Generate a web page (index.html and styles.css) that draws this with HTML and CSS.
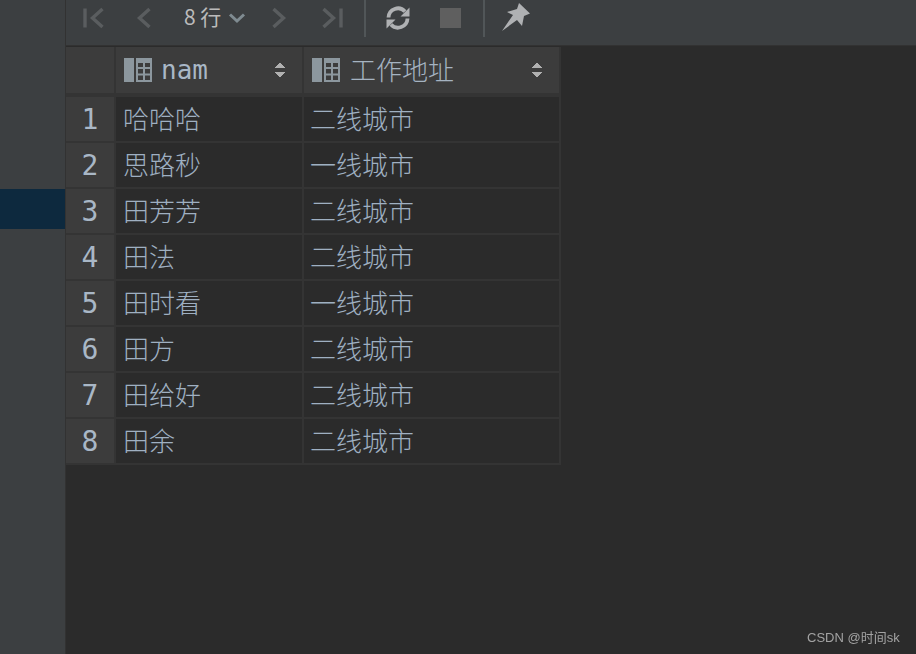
FILE: index.html
```html
<!DOCTYPE html>
<html lang="zh">
<head>
<meta charset="utf-8">
<title>Results</title>
<link rel="stylesheet" href="styles.css">
</head>
<body>
<div class="app">
  <aside class="side"><div class="side-sel"></div></aside>
  <main class="main">
    <div class="toolbar">
      <svg class="ic first" width="24" height="24" viewBox="0 0 24 24"><path d="M3 2.500v19M20.500 3l-10 9 10 9" fill="none" stroke="#5a5d5f" stroke-width="3.400"/></svg>
      <svg class="ic prev" width="16" height="24" viewBox="0 0 16 24"><path d="M13.500 3l-10 9 10 9" fill="none" stroke="#5a5d5f" stroke-width="3.400"/></svg>
      <span class="count">8 行</span>
      <svg class="chev" width="18" height="12" viewBox="0 0 18 12"><path d="M2 2.500l7 6.500 7-6.500" fill="none" stroke="#7f8b91" stroke-width="3"/></svg>
      <svg class="ic next" width="16" height="24" viewBox="0 0 16 24"><path d="M2.500 3l10 9-10 9" fill="none" stroke="#5a5d5f" stroke-width="3.400"/></svg>
      <svg class="ic last" width="24" height="24" viewBox="0 0 24 24"><path d="M3.500 3l10 9-10 9M21 2.500v19" fill="none" stroke="#5a5d5f" stroke-width="3.400"/></svg>
      <i class="sep sep-a"></i>
      <svg class="ic reload" width="26" height="26" viewBox="0 0 26 26"><path d="M3.500 12.500A9.500 9.500 0 0 1 20 6.500M22.500 13.500A9.500 9.500 0 0 1 6 19.500" fill="none" stroke="#afb1b3" stroke-width="3.800"/><path d="M24.500 2.500v9h-9zM1.500 23.500v-9h9z" fill="#afb1b3"/></svg>
      <span class="stop"></span>
      <i class="sep sep-b"></i>
      <svg class="ic pin" width="28" height="28" viewBox="0 0 28 28"><path d="M0 28L11 12 5 9 15 6 17 0 28 10.500 22 13 20 23 15 17z" fill="#afb1b3"/></svg>
    </div>
    <div class="grid">
      <div class="corner"></div>
      <div class="head"><svg class="tbl" width="28" height="24" viewBox="0 0 28 24"><path d="M0 0h10v24H0zM12 0h16v5H12z" fill="#8c979e"/><path d="M12 10h16M12 16.500h16M12 23h16M20 5v18M27 5v18M13 5v18" fill="none" stroke="#8c979e" stroke-width="2"/></svg><span class="hname">nam</span><span class="sort"></span></div>
      <div class="head"><svg class="tbl" width="28" height="24" viewBox="0 0 28 24"><path d="M0 0h10v24H0zM12 0h16v5H12z" fill="#8c979e"/><path d="M12 10h16M12 16.500h16M12 23h16M20 5v18M27 5v18M13 5v18" fill="none" stroke="#8c979e" stroke-width="2"/></svg><span class="hname cjk">工作地址</span><span class="sort"></span></div>

      <div class="num">1</div><div class="cell">哈哈哈</div><div class="cell addr">二线城市</div>
      <div class="num">2</div><div class="cell">思路秒</div><div class="cell addr">一线城市</div>
      <div class="num">3</div><div class="cell">田芳芳</div><div class="cell addr">二线城市</div>
      <div class="num">4</div><div class="cell">田法</div><div class="cell addr">二线城市</div>
      <div class="num">5</div><div class="cell">田时看</div><div class="cell addr">一线城市</div>
      <div class="num">6</div><div class="cell">田方</div><div class="cell addr">二线城市</div>
      <div class="num">7</div><div class="cell">田给好</div><div class="cell addr">二线城市</div>
      <div class="num">8</div><div class="cell">田余</div><div class="cell addr">二线城市</div>
    </div>
  </main>
</div>
<div class="mark">CSDN @时间sk</div>
</body>
</html>
```
FILE: styles.css
```css
* { box-sizing: border-box; }
html, body { margin: 0; height: 100%; overflow: hidden; background: #2b2b2b; }
.app { display: flex; width: 916px; height: 654px; }
.side { width: 65px; background: #3c3f41; padding-top: 189px; flex: none; }
.side-sel { height: 40px; background: #0d293e; }
.main { flex: 1; border-left: 1px solid #323232; display: flex; flex-direction: column; }
.toolbar { height: 46px; background: #3c3f41; border-bottom: 1px solid #323232; display: flex; align-items: center; padding: 0 0 10px 16px; flex: none; }
.ic { display: block; flex: none; }
.prev { margin-left: 30px; }
.count { margin-left: 32px; margin-top: -3px; font: 21px "Noto Sans CJK SC", "DejaVu Sans", sans-serif; color: #bbbbbb; line-height: 30px; white-space: nowrap; }
.chev { margin-left: 7px; }
.next { margin-left: 25px; }
.last { margin-left: 33px; }
.sep { display: block; width: 2px; height: 37px; background: #515658; flex: none; align-self: flex-start; }
.sep-a { margin-left: 20px; }
.reload { margin-left: 19px; }
.stop { display: block; width: 21px; height: 20px; background: #5f5f5f; margin-left: 29px; flex: none; }
.sep-b { margin-left: 22px; }
.pin { margin-left: 17px; margin-top: -2px; }
.grid { display: grid; grid-template-columns: 48px 186px 255px; grid-template-rows: 48px repeat(8, 44px); gap: 2px; width: 495px; margin-top: 1px; background: #343434; padding: 0 2px 2px 0; }
.corner { background: #3c3c3c; height: 46px; }
.head { background: #3c3c3c; height: 46px; display: flex; align-items: center; padding: 0 17px 0 8px; }
.tbl { flex: none; }
.hname { margin-left: 9px; flex: 1; font: 26px "DejaVu Sans Mono", monospace; color: #a9b7c6; white-space: nowrap; margin-top: -1px; }
.hname.cjk { margin-left: 10px; margin-top: -3px; font: 300 26px "Noto Sans CJK SC", sans-serif; color: #a5b3c1; }
.sort { display: block; width: 10px; height: 16px; flex: none; background:
  linear-gradient(to top left, #b0b0b0 50%, transparent 50%) 0 0 / 5px 6px no-repeat,
  linear-gradient(to top right, #b0b0b0 50%, transparent 50%) 5px 0 / 5px 6px no-repeat,
  linear-gradient(to bottom left, #b0b0b0 50%, transparent 50%) 0 10px / 5px 6px no-repeat,
  linear-gradient(to bottom right, #b0b0b0 50%, transparent 50%) 5px 10px / 5px 6px no-repeat; }
.num { background: #3c3c3c; color: #a9b7c6; font: 28px "DejaVu Sans Mono", monospace; display: flex; align-items: center; justify-content: center; }
.cell { background: #2b2b2b; color: #9fb0c2; font: 300 26px/42px "Noto Sans CJK SC", sans-serif; padding-left: 7px; white-space: nowrap; }
.cell.addr { padding-left: 6px; }
.mark { position: fixed; left: 807px; top: 629px; font: 13px/18px "Liberation Sans", "Noto Sans CJK SC", sans-serif; color: #a3a3a3; white-space: nowrap; }
```
